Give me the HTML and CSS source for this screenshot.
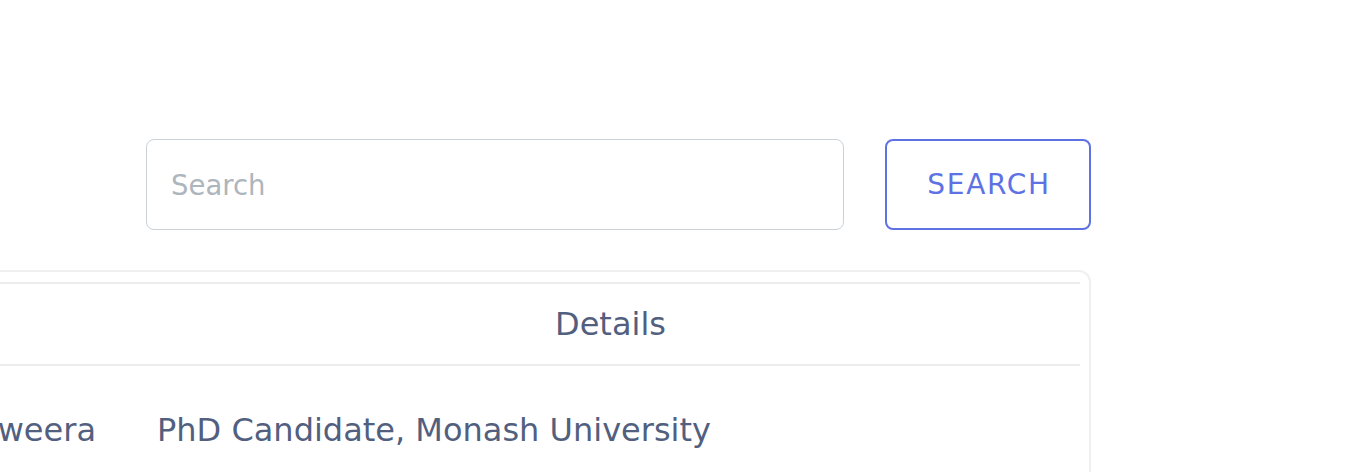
FILE: index.html
```html
<!DOCTYPE html>
<html>
<head>
<meta charset="utf-8">
<link rel="stylesheet" href="styles.css">
</head>
<body>
<div class="page">
  <div class="search-row">
    <input class="search-input" type="text" placeholder="Search">
    <button class="search-btn">Search</button>
  </div>
  <div class="card">
    <table class="tbl">
      <thead>
        <tr><th class="c-name"></th><th class="c-details">Details</th></tr>
      </thead>
      <tbody>
        <tr><td class="c-name">Chamara Jayaweera</td><td class="c-details">PhD Candidate, Monash University</td></tr>
      </tbody>
    </table>
  </div>
</div>
</body>
</html>
```
FILE: styles.css
```css
html, body {
  margin: 0;
  padding: 0;
  background: #ffffff;
  overflow: hidden;
}
body {
  font-family: "DejaVu Sans", "Noto Sans", sans-serif;
  color: #525f7f;
}
.page {
  width: 1091px;
  padding-top: 139px;
}
.search-row {
  display: flex;
  gap: 41px;
  padding-left: 146px;
}
.search-input {
  box-sizing: border-box;
  width: 699px;
  height: 91px;
  border: 1.5px solid #cad1d7;
  border-radius: 8px;
  padding: 0 24px;
  font-family: inherit;
  font-size: 27.5px;
  color: #525f7f;
  outline: none;
}
.search-input::placeholder {
  color: #adb5bd;
}
.search-btn {
  box-sizing: border-box;
  width: 206px;
  height: 91px;
  border: 2px solid #5e72e4;
  border-radius: 8px;
  background: #fff;
  color: #5e72e4;
  font-family: inherit;
  font-size: 28px;
  text-transform: uppercase;
  letter-spacing: 1.7px;
  padding: 0 0 0 2px;
}
.card {
  box-sizing: border-box;
  margin-top: 40px;
  margin-left: -300px;
  width: 1391px;
  border: 2px solid #efefef;
  border-radius: 12px;
  padding: 10px 9px 0 9px;
  height: 300px;
}
.tbl {
  width: 100%;
  border-collapse: collapse;
}
.tbl thead tr {
  border-top: 2px solid #ececec;
  border-bottom: 2px solid #ececec;
}
.tbl th {
  height: 80px;
  font-weight: 400;
  font-size: 32px;
  padding: 0;
}
.tbl td {
  height: 128px;
  font-size: 32px;
  padding: 0;
}
.c-name {
  width: 430px;
  text-align: right;
  padding-right: 45px !important;
  box-sizing: border-box;
}
.tbl th.c-details {
  text-align: center;
}
.tbl td.c-details {
  text-align: left;
  padding-left: 16px;
}
```
